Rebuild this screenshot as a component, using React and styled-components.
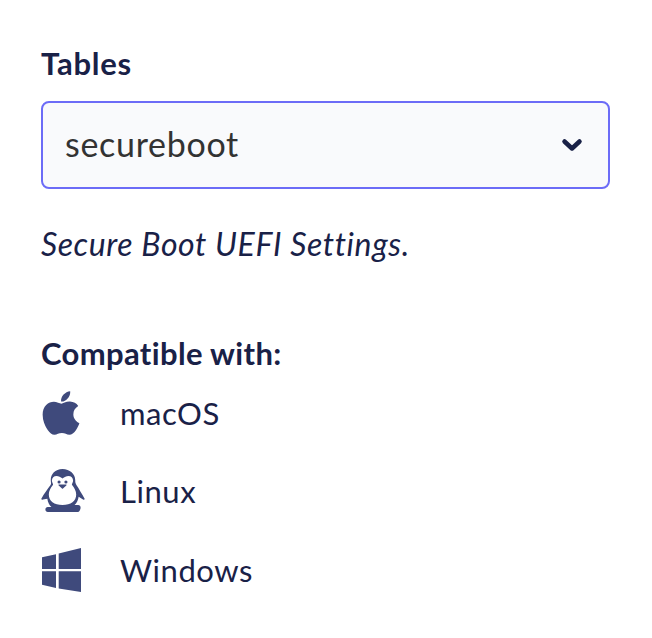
import React from "react";
import styled, { createGlobalStyle } from "styled-components";
import { FaApple } from "react-icons/fa";

const Global = createGlobalStyle`
  html, body { margin: 0; padding: 0; background: #fff; }
  body { font-family: Lato, "Open Sans", sans-serif; color: #192147; font-variant-ligatures: none; }
`;

const Page = styled.div`
  width: 652px;
  height: 638px;
  box-sizing: border-box;
  padding: 46px 42px 0 41px;
`;

const Heading = styled.h3`
  margin: 0;
  font-size: 31px;
  line-height: 34px;
  font-weight: 700;
  letter-spacing: 0.75px;
  color: #192147;
`;

const SelectBox = styled.div`
  margin-top: 21px;
  height: 88px;
  box-sizing: border-box;
  border: 2px solid #6c6cf7;
  border-radius: 8px;
  background: #f9fafc;
  display: flex;
  align-items: center;
  justify-content: space-between;
  padding: 0 25px 3px 22px;
`;

const SelectValue = styled.span`
  font-size: 34px;
  letter-spacing: 0.7px;
  color: #333;
`;

const Chevron = styled.svg`
  margin-top: 3px;
`;

const Description = styled.p`
  margin: 37px 0 0;
  font-style: italic;
  font-size: 32px;
  line-height: 36px;
  letter-spacing: 0.6px;
  color: #192147;
`;

const CompatHeading = styled(Heading)`
  margin-top: 74px;
  letter-spacing: 0.35px;
`;

const PlatformList = styled.ul`
  list-style: none;
  margin: 20px 0 0;
  padding: 0;
  display: flex;
  flex-direction: column;
  gap: 33.500px;
`;

const Platform = styled.li`
  display: flex;
  align-items: center;
  height: 45px;
  font-size: 31px;
  letter-spacing: 0.55px;
  color: #192147;
`;

const IconSlot = styled.span`
  width: 79px;
  height: 45px;
  flex: none;
  display: flex;
  align-items: center;
  color: #3f4a7c;
`;

const AppleIcon = styled(FaApple)`
  margin-left: -5.500px;
  flex: none;
`;

const PenguinSvg = styled.svg`
  margin-left: -1.500px;
  flex: none;
`;

const WindowsSvg = styled.svg`
  margin-left: 1px;
  flex: none;
`;

const Penguin = () => (
  <PenguinSvg width="45" height="44" viewBox="0 1 46 44" preserveAspectRatio="none">
    <path fill="#3f4a7c" fillRule="evenodd" d="M23 1c7.500 0 13 5 13 11 0 2 .3 3.500 1.200 5 2.800 4 5.300 8.500 8.300 13.500.5 1-.5 1.500-1.500 1l-4.500-2.800c-.5 3.500-2 6.300-4.200 8.300h3.700c1.500 0 2.500 1 2.500 2.500S40.500 44 39 44H8c-1.500 0-2.500-1-2.500-2.500S6.500 39 8 39h3.700c-2.200-2-3.700-4.800-4.200-8.300L3 31.500c-1 .5-2 0-1.500-1C4.300 25.500 7.800 21 10.800 17c.9-1.500 .2-3 .2-5C11 6 15.500 1 23 1Z M17 8c-3 0-5 2.200-4.800 5 .1 1.500 1.200 2.700 1.200 3.700-2.500 3-4.400 6.300-4.400 9.800 0 6.500 5.500 10.500 14 10.500s14-4 14-10.500c0-3.500-1.900-6.800-4.400-9.800 0-1 1.100-2.200 1.200-3.700.2-2.800-1.800-5-4.800-5-2 0-4 1-6 2.500C21 9 19 8 17 8Z" />
    <circle cx="19.500" cy="14" r="1.600" fill="#3f4a7c" />
    <circle cx="26.500" cy="14" r="1.600" fill="#3f4a7c" />
    <path fill="#3f4a7c" d="M19.500 16.500h7c.6 0 .8.600.4 1L23.500 20.500c-.3.300-.7.300-1 0l-3.400-3c-.4-.4-.2-1 .4-1Z" />
  </PenguinSvg>
);

const WindowsIcon = () => (
  <WindowsSvg width="39" height="44" viewBox="0 0 39 44">
    <path fill="#3f4a7c" d="M0 9.300 14 6.200V21H0ZM16.700 5.500 39 0V21H16.700ZM0 23.300H14V40L0 36.700ZM16.700 23.300H39V44L16.700 40.600Z" />
  </WindowsSvg>
);

const platforms = [
  { name: "macOS", icon: <AppleIcon size={50} /> },
  { name: "Linux", icon: <Penguin /> },
  { name: "Windows", icon: <WindowsIcon /> },
];

export default function App() {
  return (
    <Page>
      <Global />
      <Heading>Tables</Heading>
      <SelectBox>
        <SelectValue>secureboot</SelectValue>
        <Chevron width="22" height="14" viewBox="0 0 22 14">
          <path d="M3.500 3.500 11 10.500 18.500 3.500" fill="none" stroke="#192147" strokeWidth="4.500" strokeLinecap="round" strokeLinejoin="round" />
        </Chevron>
      </SelectBox>
      <Description>Secure Boot UEFI Settings.</Description>
      <CompatHeading>Compatible with:</CompatHeading>
      <PlatformList>
        {platforms.map((p) => (
          <Platform key={p.name}>
            <IconSlot>{p.icon}</IconSlot>
            {p.name}
          </Platform>
        ))}
      </PlatformList>
    </Page>
  );
}
